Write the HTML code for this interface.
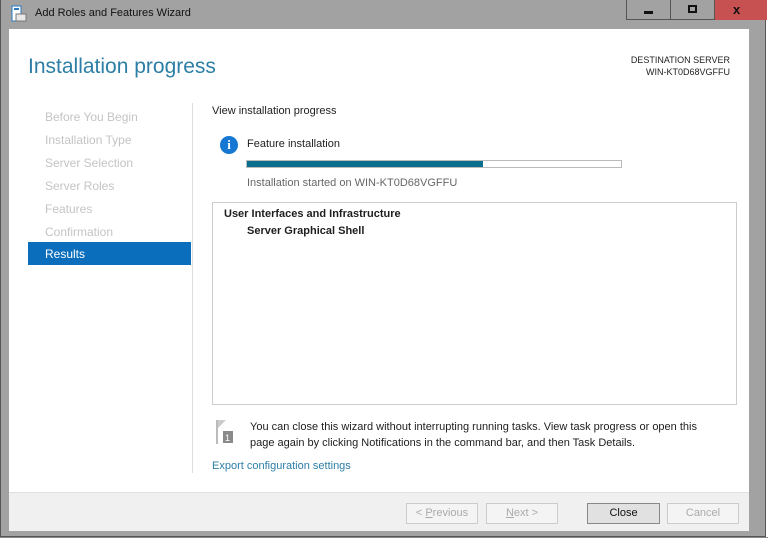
<!DOCTYPE html>
<html><head><style>
*{margin:0;padding:0;box-sizing:border-box}
body{width:768px;height:543px;background:#fff;position:relative;overflow:hidden;font-family:"Liberation Sans",sans-serif;font-size:11px;color:#1e1e1e}
.a{position:absolute}
</style></head><body>
<div class="a" style="left:0;top:0;width:766px;height:537px;background:#a2a2a2;border:1px solid #555;border-top:none"></div>
<div class="a" style="left:0;top:537px;width:768px;height:6px;background:#fff;border-top:1px solid #888"></div>
<svg class="a" style="left:11px;top:5px" width="16" height="18"><rect x="1" y="1" width="9" height="15" fill="#fff" stroke="#2a7ac0"/><rect x="3" y="3" width="5" height="2" fill="#2a7ac0"/><rect x="5" y="9" width="10" height="7" fill="#e8e8e8" stroke="#777"/></svg>
<div class="a" style="left:35px;top:7px;font-size:11px;color:#111">Add Roles and Features Wizard</div>
<div class="a" style="left:626px;top:0;width:45px;height:20px;background:#a2a2a2;border:1px solid #555;border-top:none"></div>
<div class="a" style="left:644px;top:11px;width:9px;height:3px;background:#111"></div>
<div class="a" style="left:670px;top:0;width:45px;height:20px;background:#a2a2a2;border:1px solid #555;border-top:none"></div>
<div class="a" style="left:688px;top:5px;width:9px;height:8px;border:2px solid #111"></div>
<div class="a" style="left:715px;top:0;width:52px;height:20px;background:#c75050"></div>
<div class="a" style="left:733px;top:2px;font-size:13px;font-weight:bold;color:#111">x</div>
<div class="a" style="left:9px;top:29px;width:740px;height:463px;background:#fff"></div>
<div class="a" style="left:9px;top:492px;width:740px;height:39px;background:#f0f0f0;border-top:1px solid #e0e0e0"></div>
<div class="a" style="left:28px;top:55px;font-size:21px;color:#2d7ea6">Installation progress</div>
<div class="a" style="left:600px;top:54px;width:130px;text-align:right;font-size:9px;line-height:12px;color:#222">DESTINATION SERVER<br>WIN-KT0D68VGFFU</div>
<div class="a" style="left:45px;top:106px;line-height:23px;font-size:12px;color:#c4c4c4">Before You Begin<br>Installation Type<br>Server Selection<br>Server Roles<br>Features<br>Confirmation</div>
<div class="a" style="left:28px;top:242px;width:163px;height:23px;background:#0a6ebd;color:#fff;font-size:12px;padding:5px 0 0 17px">Results</div>
<div class="a" style="left:192px;top:103px;width:1px;height:370px;background:#ddd"></div>
<div class="a" style="left:212px;top:105px;font-size:11px">View installation progress</div>
<div class="a" style="left:220px;top:136px;width:18px;height:18px;border-radius:50%;background:#1678d2;color:#fff;font-weight:bold;font-size:13px;text-align:center;line-height:18px;font-family:'Liberation Serif',serif">i</div>
<div class="a" style="left:247px;top:138px;font-size:11px">Feature installation</div>
<div class="a" style="left:246px;top:160px;width:376px;height:8px;border:1px solid #bbb;background:#fff"><div style="width:236px;height:6px;background:#0a6e8e"></div></div>
<div class="a" style="left:247px;top:177px;font-size:11px;color:#666">Installation started on WIN-KT0D68VGFFU</div>
<div class="a" style="left:212px;top:202px;width:525px;height:203px;border:1px solid #ccc"></div>
<div class="a" style="left:224px;top:208px;font-size:11px;font-weight:bold">User Interfaces and Infrastructure</div>
<div class="a" style="left:247px;top:225px;font-size:11px;font-weight:bold">Server Graphical Shell</div>
<svg class="a" style="left:214px;top:419px" width="24" height="26"><path d="M3 1v24" stroke="#bbb" stroke-width="2"/><path d="M4 1h8l-8 8z" fill="#ccc"/><rect x="9" y="12" width="10" height="12" fill="#8a8a8a"/><text x="11" y="22" font-size="9" fill="#fff" font-family="Liberation Sans">1</text></svg>
<div class="a" style="left:250px;top:419px;font-size:11px;line-height:16px;width:470px">You can close this wizard without interrupting running tasks. View task progress or open this page again by clicking Notifications in the command bar, and then Task Details.</div>
<div class="a" style="left:212px;top:460px;font-size:11px;color:#2d7ea6">Export configuration settings</div>
<div class="a" style="left:406px;top:503px;width:72px;height:21px;border:1px solid #ccc;background:#f4f4f4;color:#aaa;text-align:center;line-height:19px">&lt; <u>P</u>revious</div>
<div class="a" style="left:486px;top:503px;width:72px;height:21px;border:1px solid #ccc;background:#f4f4f4;color:#aaa;text-align:center;line-height:19px"><u>N</u>ext &gt;</div>
<div class="a" style="left:587px;top:503px;width:73px;height:21px;border:1px solid #888;background:#e1e1e1;color:#111;text-align:center;line-height:19px">Close</div>
<div class="a" style="left:667px;top:503px;width:72px;height:21px;border:1px solid #ccc;background:#f4f4f4;color:#aaa;text-align:center;line-height:19px">Cancel</div>
</body></html>
